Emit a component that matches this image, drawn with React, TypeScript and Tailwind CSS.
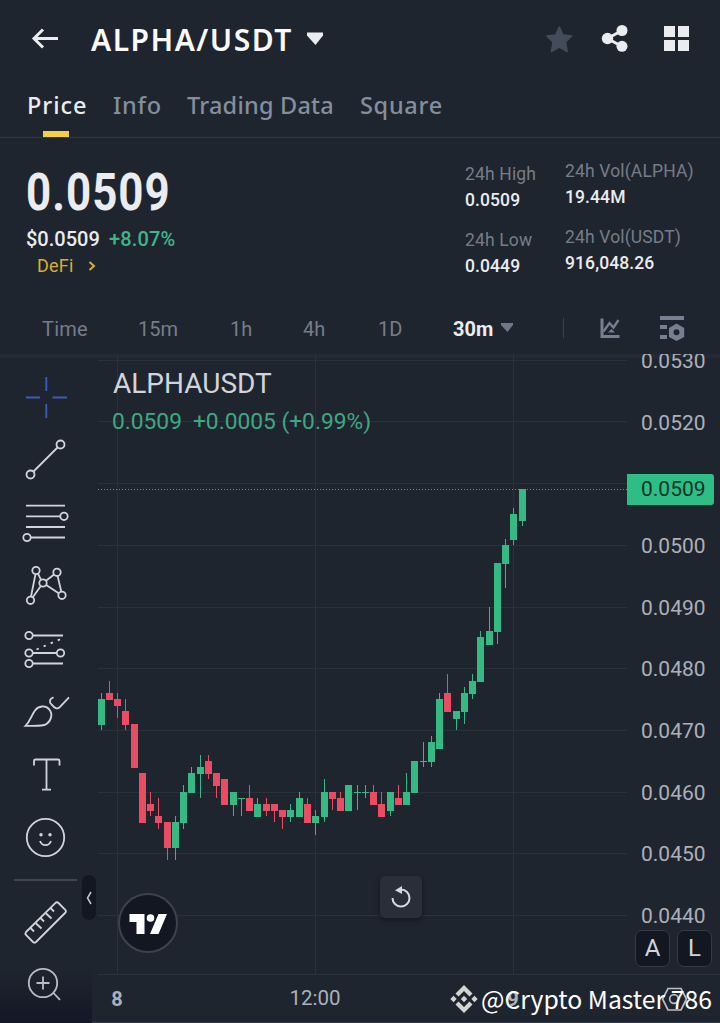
import type { ReactNode } from "react";

const UP = "#36b983";
const DOWN = "#ea4d63";

type Candle = [x: number, up: 0 | 1, top: number, bottom: number, high: number, low: number];

const candles: Candle[] = [
  [98, 1, 699, 725, 693, 730], [106, 0, 693, 700, 681, 700], [114, 0, 699, 706, 693, 718],
  [122, 0, 711, 725, 699, 730], [131, 0, 724, 768, 724, 768], [139, 0, 773, 823, 773, 823],
  [147, 0, 804, 811, 792, 816], [155, 0, 816, 823, 798, 829], [164, 0, 822, 848, 822, 860],
  [172, 1, 822, 848, 816, 860], [180, 1, 792, 823, 785, 829], [188, 1, 773, 793, 767, 793],
  [197, 1, 767, 774, 755, 798], [205, 0, 761, 774, 755, 779], [213, 0, 773, 786, 773, 798],
  [221, 0, 779, 805, 779, 805], [230, 1, 792, 805, 792, 816], [238, 1, 798, 799, 798, 816],
  [246, 0, 798, 811, 785, 811], [254, 1, 804, 817, 798, 817], [263, 0, 804, 811, 798, 816],
  [271, 0, 804, 811, 804, 822], [279, 0, 810, 817, 810, 829], [287, 1, 810, 817, 804, 822],
  [296, 1, 798, 817, 792, 817], [304, 0, 804, 823, 798, 823], [312, 1, 816, 823, 810, 835],
  [321, 1, 792, 817, 779, 822], [329, 0, 792, 799, 792, 810], [337, 0, 798, 811, 792, 811],
  [345, 1, 785, 811, 785, 811], [354, 1, 792, 793, 785, 810], [362, 1, 792, 793, 785, 798],
  [370, 0, 792, 805, 785, 805], [378, 0, 804, 817, 792, 817], [387, 1, 792, 811, 792, 816],
  [395, 0, 798, 805, 785, 805], [403, 1, 792, 805, 773, 805], [411, 1, 761, 793, 761, 793],
  [420, 1, 761, 762, 742, 767], [428, 1, 742, 762, 736, 767], [436, 1, 699, 749, 693, 749],
  [444, 0, 693, 712, 674, 712], [453, 1, 711, 719, 711, 730], [461, 1, 693, 712, 687, 724],
  [469, 1, 681, 694, 674, 699], [477, 1, 637, 682, 631, 682], [486, 1, 631, 645, 607, 645],
  [494, 1, 563, 632, 563, 644], [502, 1, 545, 564, 539, 588], [510, 1, 514, 540, 508, 545],
  [519, 1, 489, 521, 489, 526],
];

const gridRows = [360, 421, 483, 545, 607, 668, 730, 792, 853, 915];
const gridCols = [117, 315, 513];

function Header() {
  return (
    <header className="flex h-[78px] shrink-0 items-center pl-[31px]">
      <svg className="h-[22px] w-[28px] shrink-0" viewBox="31 28 28 22" fill="none" stroke="#eaecef" strokeWidth="3">
        <path d="M58 38.5H34M43 29.5L34 38.5L43 47.5" />
      </svg>
      <h1 className="ml-8 mt-px w-[216px] shrink-0 whitespace-nowrap font-['Noto_Sans'] text-[30px] font-semibold leading-none tracking-[1.500px] text-[#fafafa]">
        ALPHA/USDT
      </h1>
      <svg className="h-4 w-4 shrink-0" viewBox="0 0 16 16" fill="#eaecef">
        <path d="M0 1.500H16V4.500L8.500 14L0 4.500Z" />
      </svg>
      <svg className="ml-[222px] h-7 w-7 shrink-0" viewBox="545 25 28 28" fill="#434c5a" stroke="#434c5a" strokeWidth="1.500" strokeLinejoin="round">
        <path d="M559.300 27L563 35L571.700 36L565.500 42L567.200 51.500L559.300 47L551.400 51.500L553 42L546.800 36L555.600 35Z" />
      </svg>
      <svg className="ml-7 h-7 w-7 shrink-0" viewBox="601 25 28 28" fill="#eaecef">
        <path d="M622 30.500L607.500 38.500L622 46.500" fill="none" stroke="#eaecef" strokeWidth="3" />
        <circle cx="622" cy="30.500" r="5.500" />
        <circle cx="607.500" cy="38.500" r="5.700" />
        <circle cx="622" cy="46.300" r="5.500" />
      </svg>
      <div className="-mt-px ml-[35px] grid shrink-0 grid-cols-2 gap-[3px]">
        {[0, 1, 2, 3].map((i) => (
          <span key={i} className="h-[11px] w-[11px] bg-[#eaecef]" />
        ))}
      </div>
    </header>
  );
}

function Tabs() {
  const base = "shrink-0 whitespace-nowrap pt-[16px] font-['Noto_Sans'] text-[23.5px] font-medium leading-none";
  return (
    <nav className="flex h-[60px] shrink-0 border-b border-[#313843] pl-[27px] text-[#848e9c]">
      <div className="flex w-[86px] shrink-0 flex-col justify-between">
        <span className={`${base} tracking-[0.950px] text-[#eaecef]`}>Price</span>
        <span className="ml-4 h-[6px] w-[26px] bg-[#f5d043]" />
      </div>
      <span className={`${base} w-[74px] tracking-[0.750px]`}>Info</span>
      <span className={`${base} w-[173px] tracking-[0.220px]`}>Trading Data</span>
      <span className={`${base} tracking-[0.700px]`}>Square</span>
    </nav>
  );
}

function Stat({ label, value }: { label: string; value: string }) {
  return (
    <div className="h-[66px] whitespace-nowrap font-['Roboto'] text-[17.500px] leading-[26px]">
      <div className="tracking-[0.150px] text-[#767d89]">{label}</div>
      <div className="font-medium tracking-[0.100px] text-[#eaecef]">{value}</div>
    </div>
  );
}

function Summary() {
  return (
    <section className="flex h-[163px] shrink-0 pl-[27px] font-['Roboto']">
      <div className="w-[438px] shrink-0 pt-[29px]">
        <div className="-ml-px origin-left scale-x-[0.860] text-[51px] font-bold leading-[51px] tracking-[1.200px] text-[#eaecef]">
          0.0509
        </div>
        <div className="mt-[8px] flex text-[20px] font-medium leading-[27px]">
          <span className="-ml-px w-[83px] shrink-0 text-[#eaecef]">$0.0509</span>
          <span className="tracking-[0.150px] text-[#3fb68a]">+8.07%</span>
        </div>
        <div className="flex items-center pl-[10px] text-[18px] leading-[26px] text-[#d9ae34]">
          <span className="w-[51px] tracking-[0.200px]">DeFi</span>
          <svg className="h-[10px] w-2" viewBox="0 0 8 10" fill="none" stroke="#d9ae34" strokeWidth="2">
            <path d="M1.500 1L6 5L1.500 9" />
          </svg>
        </div>
      </div>
      <div className="w-[100px] shrink-0 pt-[23px]">
        <Stat label="24h High" value="0.0509" />
        <Stat label="24h Low" value="0.0449" />
      </div>
      <div className="pt-5">
        <Stat label="24h Vol(ALPHA)" value="19.44M" />
        <Stat label="24h Vol(USDT)" value="916,048.26" />
      </div>
    </section>
  );
}

function Intervals() {
  return (
    <div className="flex h-[53px] shrink-0 items-center whitespace-nowrap pl-[42px] pt-[3px] font-['Roboto'] text-[20px] leading-none text-[#767d8a]">
      <span className="w-[96px] shrink-0 tracking-[0.200px]">Time</span>
      <span className="w-[92px] shrink-0">15m</span>
      <span className="w-[73px] shrink-0">1h</span>
      <span className="w-[75px] shrink-0">4h</span>
      <span className="w-[75px] shrink-0">1D</span>
      <span className="w-[48px] shrink-0 font-bold text-[#eaecef]">30m</span>
      <svg className="-mt-[2px] h-[10px] w-3 shrink-0" viewBox="0 0 12 10" fill="#707887">
        <path d="M0 0H12V2L6.500 9L0 2Z" />
      </svg>
      <span className="-mt-[3px] ml-[50px] h-5 w-px shrink-0 bg-[#39404c]" />
      <svg className="-mt-[3px] ml-[36px] h-5 w-[20px] shrink-0" viewBox="600 317 20 20" fill="none" stroke="#777f90" strokeWidth="3">
        <path d="M602 317.500V335.500H619.500" />
        <path d="M603.500 330.500L609.500 322L613.500 326.500L618.500 319" strokeWidth="2.300" />
        <path d="M608 331.500L611.500 328L615 331.500Z" fill="#777f90" stroke="none" />
      </svg>
      <svg className="-mt-[2px] ml-[40px] h-[26px] w-[25px] shrink-0" viewBox="660 315 25 26" fill="#777f90">
        <path d="M660 316H684V320H660ZM660 325H667V329H660ZM660 335H667V339H660Z" />
        <path fillRule="evenodd" d="M676.500 323.500L684.200 328V337L676.500 341L669 337V328ZM676.500 329.300A3 3 0 1 0 676.500 335.300A3 3 0 1 0 676.500 329.300Z" />
      </svg>
    </div>
  );
}

function Tool({ top, children }: { top: number; children: ReactNode }) {
  return (
    <div className="flex h-[62.900px] shrink-0 items-center justify-center">
      <svg className="h-12 w-12" viewBox={`22 ${top} 48 48`} fill="none" stroke="#d1d4dc" strokeWidth="1.800">
        {children}
      </svg>
    </div>
  );
}

function Toolbar() {
  return (
    <aside className="flex w-[92px] shrink-0 flex-col bg-[linear-gradient(to_bottom,transparent_615px,#131726_668px)] pt-[11.500px]">
      <Tool top={373}>
        <path stroke="#3a5cc0" d="M46.300 377V391M46.300 404V418M26 397.500H40M52.500 397.500H67" />
      </Tool>
      <Tool top={436}>
        <circle cx="60.500" cy="444.500" r="4" />
        <circle cx="30.500" cy="474.500" r="4" />
        <path d="M33.500 471.500L57.500 447.500" />
      </Tool>
      <Tool top={499}>
        <path d="M26 505.700H65M26 516.300H60M26 527H65M31 537.500H65" />
        <circle cx="64" cy="516.300" r="3.700" />
        <circle cx="27" cy="537.500" r="3.700" />
      </Tool>
      <Tool top={562}>
        <circle cx="36" cy="570.500" r="3.700" />
        <circle cx="57" cy="572.300" r="3.700" />
        <circle cx="43" cy="583" r="3.700" />
        <circle cx="30.500" cy="600.300" r="3.700" />
        <circle cx="62" cy="595.300" r="3.700" />
        <path d="M35.500 574.300L31 596.500M38 573.700L41 579.800M46 580.800L54 574.500M57.600 576L61.300 591.600M46.200 585L58.700 593.300M40.800 586L32.800 597.200" />
      </Tool>
      <Tool top={625}>
        <circle cx="29" cy="635.500" r="3.700" />
        <circle cx="29" cy="653" r="3.700" />
        <circle cx="60.500" cy="653" r="3.700" />
        <circle cx="29" cy="663.500" r="3.700" />
        <path d="M33 635.500H63M33 653H56.500M33 663.500H63" />
        <path d="M36.500 649.500L62 638.500" strokeDasharray="2.500 5.200" />
      </Tool>
      <Tool top={688}>
        <path d="M25.500 726.800C30.500 722 31.500 716 35 711.500C38.500 706.700 45.500 706 49.200 710.300C53 714.800 51.500 721.500 46.500 725C43.500 727.200 39 726.800 25.500 726.800Z" />
        <path d="M53.500 698.300C49.500 699.500 48.700 703 51.700 705.600C54.500 709 57 711 60 707.800L69 698.300" />
      </Tool>
      <Tool top={750}>
        <path d="M34 765.500V761Q34 759.500 35.500 759.500H58Q59.500 759.500 59.500 761V765.500M46.500 759.500V789.500M42 789.700H51" />
      </Tool>
      <Tool top={813}>
        <circle cx="45.500" cy="837.500" r="18.700" />
        <circle cx="41" cy="834.700" r="1.700" fill="#d1d4dc" stroke="none" />
        <circle cx="50" cy="834.700" r="1.700" fill="#d1d4dc" stroke="none" />
        <path d="M40 841C42 846.500 49 846.500 51 841" />
      </Tool>
      <div className="ml-[14px] mt-[10.500px] h-[2px] w-[63px] shrink-0 bg-[#40454f]" />
      <div className="flex h-[82px] shrink-0 items-center justify-center">
        <svg className="h-12 w-12" viewBox="22 898 48 48" fill="none" stroke="#d1d4dc" strokeWidth="1.800">
          <path d="M26 932L55.500 902.800Q57 901.500 58.500 903L65.500 910Q66.500 911.500 65.500 912.500L36 942Q34.500 943.300 33 942L26 935Q24.800 933.500 26 932Z" />
          <path d="M30.500 928L34 931.500M35.500 923L41.500 928.500M40.500 918L44 921.500M45.500 913L51.500 918.500M50.500 908L54 911.500" />
        </svg>
      </div>
      <div className="flex h-[42px] shrink-0 items-center justify-center">
        <svg className="h-10 w-12" viewBox="22 964 48 40" fill="none" stroke="#b9bcc4" strokeWidth="1.800">
          <circle cx="43" cy="983" r="14.200" />
          <path d="M36.500 983H49.500M43 976.500V989.500M53.500 993L60 999.800" />
        </svg>
      </div>
    </aside>
  );
}

function Chart() {
  return (
    <div className="relative h-[621px] w-[535px] shrink-0">
      <svg className="h-full w-full" viewBox="92 354 535 621" shapeRendering="crispEdges">
        {gridRows.map((y) => (
          <rect key={y} x="98" y={y} width="529" height="1" fill="#2b313b" />
        ))}
        {gridCols.map((x) => (
          <rect key={x} x={x} y="354" width="1" height="621" fill="#2b313b" />
        ))}
        <rect x="98" y="974" width="529" height="1" fill="#2b313b" />
        <path d="M98 489.500H627" stroke="#3fae82" strokeWidth="1" strokeDasharray="1 2" />
        {candles.map(([x, up, top, bottom, high, low]) => (
          <g key={x} fill={up ? UP : DOWN}>
            <rect x={x + 3} y={high} width="1" height={low - high} />
            <rect x={x} y={top} width="7" height={bottom - top} />
          </g>
        ))}
      </svg>
      <div className="absolute left-5 top-4 whitespace-nowrap font-['Roboto'] leading-none">
        <div className="pl-px text-[28px] leading-[28px] text-[#d1d4dc]">ALPHAUSDT</div>
        <div className="mt-[12px] text-[22.750px] leading-[23px] text-[#3fa882]">
          <span className="mr-[11px]">0.0509</span>+0.0005 (+0.99%)
        </div>
      </div>
      <div className="absolute -left-[10px] top-[521px] flex h-[45px] w-[14px] items-center justify-center rounded-[7px] bg-[#131722]">
        <svg className="h-[14px] w-[6px]" viewBox="0 0 6 14" fill="none" stroke="#c4c7cf" strokeWidth="1.500">
          <path d="M5 1L1.500 7L5 13" />
        </svg>
      </div>
      <div className="absolute left-[26px] top-[539px] flex h-[60px] w-[60px] items-center justify-center rounded-full border-2 border-[#3f424d] bg-[#131722]">
        <svg className="mt-px h-5 w-[38px]" viewBox="129.500 914 38 20" fill="white">
          <path d="M130 914H145V934H137V922H130ZM159 914H167.500L159 934H150.500Z" />
          <circle cx="151" cy="918" r="3.800" />
        </svg>
      </div>
      <div className="absolute left-[288px] top-[522px] flex h-[42px] w-[42px] items-center justify-center rounded-[5px] bg-[#2a2e39] shadow-[0_2px_5px_#12151c]">
        <svg className="h-[24px] w-[24px]" viewBox="389 885 24 24" fill="none" stroke="#d5d8e0" strokeWidth="2">
          <path d="M392.500 898A8.500 8.500 0 1 0 401 889.500H399" />
          <path d="M395 890.300L402 886V894Z" fill="#d5d8e0" stroke="none" />
        </svg>
      </div>
    </div>
  );
}

function PriceAxis() {
  const labels = ["0.0530", "0.0520", "", "0.0500", "0.0490", "0.0480", "0.0470", "0.0460", "0.0450", "0.0440"];
  return (
    <div className="h-[621px] w-[93px] shrink-0 overflow-hidden border-b border-[#2b313b] font-['Roboto'] text-[21px] text-[#adb0b9]">
      <div className="mt-[-23px]">
        {labels.map((l, i) =>
          l ? (
            <div key={i} className="flex h-[61.650px] items-center pl-[14px]">
              {l}
            </div>
          ) : (
            <div key={i} className="flex h-[61.650px] items-center pt-[9px]">
              <div className="flex h-[31px] w-[87px] items-center rounded-r-[3px] bg-[#2ebd85] pl-[14px] pt-px text-[#103328]">0.0509</div>
            </div>
          ),
        )}
      </div>
      <div className="-mt-[17.500px] flex gap-[7px] pl-2 text-[24px] leading-none text-[#d1d4dc]">
        {["A", "L"].map((l) => (
          <span key={l} className="flex h-[37px] w-[35px] items-center justify-center rounded-[7px] border border-[#363a45] bg-[#131722]">
            {l}
          </span>
        ))}
      </div>
    </div>
  );
}

function TimeAxis() {
  return (
    <div className="flex h-[48px] items-center border-b border-[#343b4a] font-['Roboto'] text-[20px] text-[#adb0b9]">
      <span className="w-[50px] shrink-0 text-center font-bold">8</span>
      <span className="ml-[123px] w-[100px] shrink-0 text-center text-[20.500px]">12:00</span>
      <span className="ml-[123px] w-[50px] shrink-0 text-center font-bold">9</span>
      <svg className="ml-[122px] h-[26px] w-[28px] shrink-0" viewBox="660 986 28 26" fill="none" stroke="#b9bdc8" strokeWidth="1.700">
        <path d="M668 988.500H681L686.500 999L681 1010H668L662.500 999Z" />
        <circle cx="674" cy="999" r="4.300" />
      </svg>
    </div>
  );
}

function Watermark() {
  return (
    <div className="absolute left-[450px] top-[982px] flex h-[34px] items-center whitespace-nowrap text-white">
      <svg className="h-7 w-7 shrink-0" viewBox="450 985 28 28" fill="#d4d4d4">
        <path d="M464 985L472.500 993.500L469.500 996.500L464 991L458.500 996.500L455.500 993.500ZM464 1013L472.500 1004.500L469.500 1001.500L464 1007L458.500 1001.500L455.500 1004.500ZM464 995.800L467.200 999L464 1002.200L460.800 999ZM453.500 995.800L456.700 999L453.500 1002.200L450.300 999ZM474.500 995.800L477.700 999L474.500 1002.200L471.300 999Z" />
      </svg>
      <span className="-mt-[2px] ml-[3px] font-['Noto_Sans_CJK_SC'] text-[24.750px] leading-none">@Crypto Master 786</span>
    </div>
  );
}

export default function App() {
  return (
    <div className="relative flex h-[1023px] w-[720px] flex-col overflow-hidden bg-[#1f252f]">
      <Header />
      <Tabs />
      <Summary />
      <Intervals />
      <div className="flex h-[669px] shrink-0 bg-[linear-gradient(to_bottom,#242a35_0px,#242a35_4px,transparent_4px)]">
        <Toolbar />
        <div className="flex flex-col">
          <div className="flex">
            <Chart />
            <PriceAxis />
          </div>
          <TimeAxis />
        </div>
      </div>
      <Watermark />
    </div>
  );
}
